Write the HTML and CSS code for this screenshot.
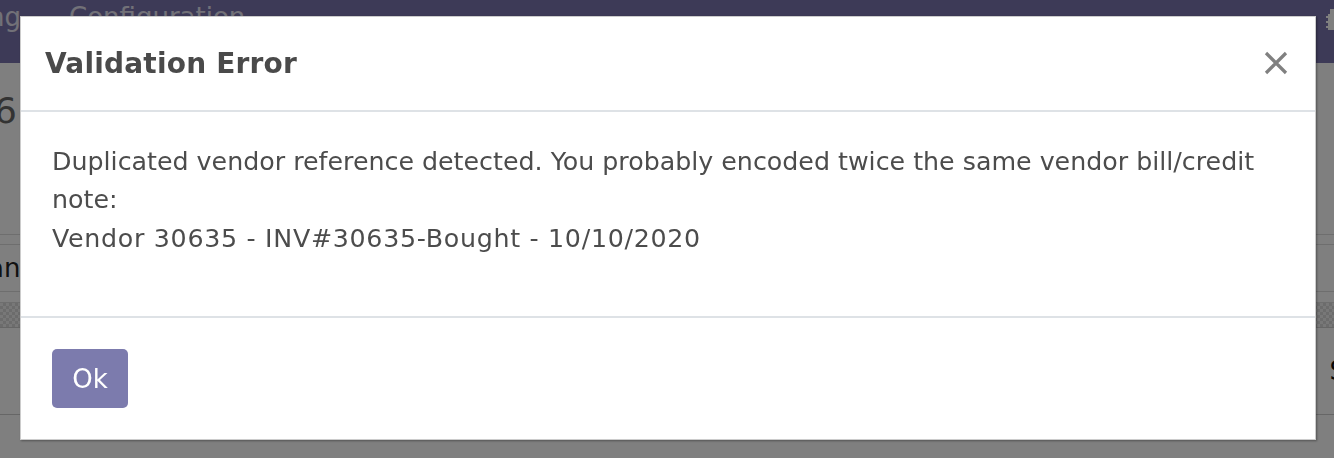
FILE: index.html
```html
<!DOCTYPE html>
<html lang="en">
<head>
<meta charset="utf-8">
<title>Validation Error</title>
<link rel="stylesheet" href="styles.css">
</head>
<body>
<div class="page">
  <header class="navbar">
    <span class="nav-item nav-first">ng</span>
    <span class="nav-item">Configuration</span>
    <span class="nav-spacer"></span>
    <svg class="bug" width="14" height="26" viewBox="0 0 14 26" aria-hidden="true">
      <path d="M5 4 h8 v4 h-8z M3 9 h11 v14 h-11z M0 11 h3 M0 16 h3 M0 21 h3" fill="#fff" stroke="#fff" stroke-width="2"/>
    </svg>
  </header>
  <main class="content">
    <div class="crumb"><span class="crumb-num">6</span></div>
    <div class="row row-thin"></div>
    <div class="row row-text"><span>an</span></div>
    <div class="row row-gap"></div>
    <div class="row row-check"></div>
    <div class="row row-mid"><span class="row-right">S</span></div>
    <div class="row row-last"></div>
  </main>
</div>
<div class="backdrop"></div>
<div class="modal" role="dialog">
  <div class="modal-header">
    <h4 class="modal-title">Validation Error</h4>
    <svg class="close" width="24" height="24" viewBox="0 0 24 24" aria-label="Close">
      <path d="M2 2 L22 22 M22 2 L2 22" stroke="#808080" stroke-width="3.2" fill="none"/>
    </svg>
  </div>
  <div class="modal-body">
    <p class="msg">Duplicated vendor reference detected. You probably encoded twice the same vendor bill/credit note:<br><span class="ref">Vendor 30635 - INV#30635-Bought - 10/10/2020</span></p>
  </div>
  <div class="modal-footer">
    <button class="btn-primary" type="button">Ok</button>
  </div>
</div>
</body>
</html>
```

FILE: styles.css
```css
html, body {
  margin: 0;
  padding: 0;
  height: 100%;
  overflow: hidden;
}
body {
  font-family: "DejaVu Sans", "Liberation Sans", sans-serif;
  background: #ffffff;
}
.page {
  display: flex;
  flex-direction: column;
  height: 458px;
}
.navbar {
  height: 63px;
  flex: none;
  background: #7a75ae;
  display: flex;
  align-items: flex-start;
  padding-top: 2px;
  box-sizing: border-box;
}
.nav-item {
  color: #e4e2f0;
  font-size: 26px;
  line-height: 30px;
  padding: 0 24px;
}
.nav-first {
  margin-left: -36px;
}
.nav-spacer { flex: 1; }
.bug { margin: 4px 0 0 0; flex: none; transform: translateX(6px); }
.content {
  flex: 1;
  display: flex;
  flex-direction: column;
  color: #222;
}
.crumb {
  height: 171px;
  display: flex;
  border-bottom: 1px solid #ddd;
}
.crumb-num {
  font-size: 36px;
  line-height: 36px;
  margin: 30px 0 0 -6px;
  color: #666;
}
.row-thin { height: 9px; border-bottom: 1px solid #ddd; }
.row-text {
  height: 46px;
  border-bottom: 1px solid #ddd;
  display: flex;
  align-items: center;
  font-size: 26px;
  margin-left: -12px;
}
.row-gap { height: 10px; border-bottom: 1px solid #ddd; }
.row-check {
  height: 24px;
  border-bottom: 1px solid #ccc;
  background-color: #e6e6e6;
  background-image: repeating-conic-gradient(#d9d9d9 0 25%, #f0f0f0 0 50%);
  background-size: 6px 6px;
}
.row-mid {
  height: 86px;
  border-bottom: 1px solid #ccc;
  display: flex;
  justify-content: flex-end;
  align-items: center;
  font-size: 26px;
}
.row-right { margin-right: -12px; color: #111; }
.row-last { flex: 1; }

.backdrop {
  position: fixed;
  inset: 0;
  background: rgba(0, 0, 0, 0.5);
}

.modal {
  position: absolute;
  left: 20px;
  top: 16px;
  width: 1296px;
  height: 424px;
  box-sizing: border-box;
  background: #fff;
  border: 1px solid rgba(0, 0, 0, 0.2);
  box-shadow: 1px 1px 2px rgba(0, 0, 0, 0.35);
  display: flex;
  flex-direction: column;
  color: #4c4c4c;
}
.modal-header {
  height: 95px;
  flex: none;
  box-sizing: border-box;
  border-bottom: 2px solid #dee2e6;
  display: flex;
  align-items: center;
  justify-content: space-between;
  padding: 0 27px 0 24px;
}
.modal-title {
  margin: 0;
  font-size: 28px;
  font-weight: bold;
  color: #4a4a4a;
  letter-spacing: 0.2px;
}
.close { flex: none; margin-top: -1px; }
.modal-body {
  flex: none;
  height: 204px;
  box-sizing: border-box;
  padding: 31px 31px 0 31px;
}
.msg {
  margin: 0;
  font-size: 25.3px;
  line-height: 38.4px;
  color: #4c4c4c;
}
.ref {
  letter-spacing: 0.7px;
}
.modal-footer {
  flex: 1;
  border-top: 2px solid #dee2e6;
  padding: 31px 31px;
  display: flex;
  align-items: flex-start;
}
.btn-primary {
  font-family: inherit;
  font-size: 26px;
  color: #fff;
  background: #7c7bad;
  border: none;
  border-radius: 5px;
  width: 76px;
  height: 59px;
  padding: 0;
}
```
